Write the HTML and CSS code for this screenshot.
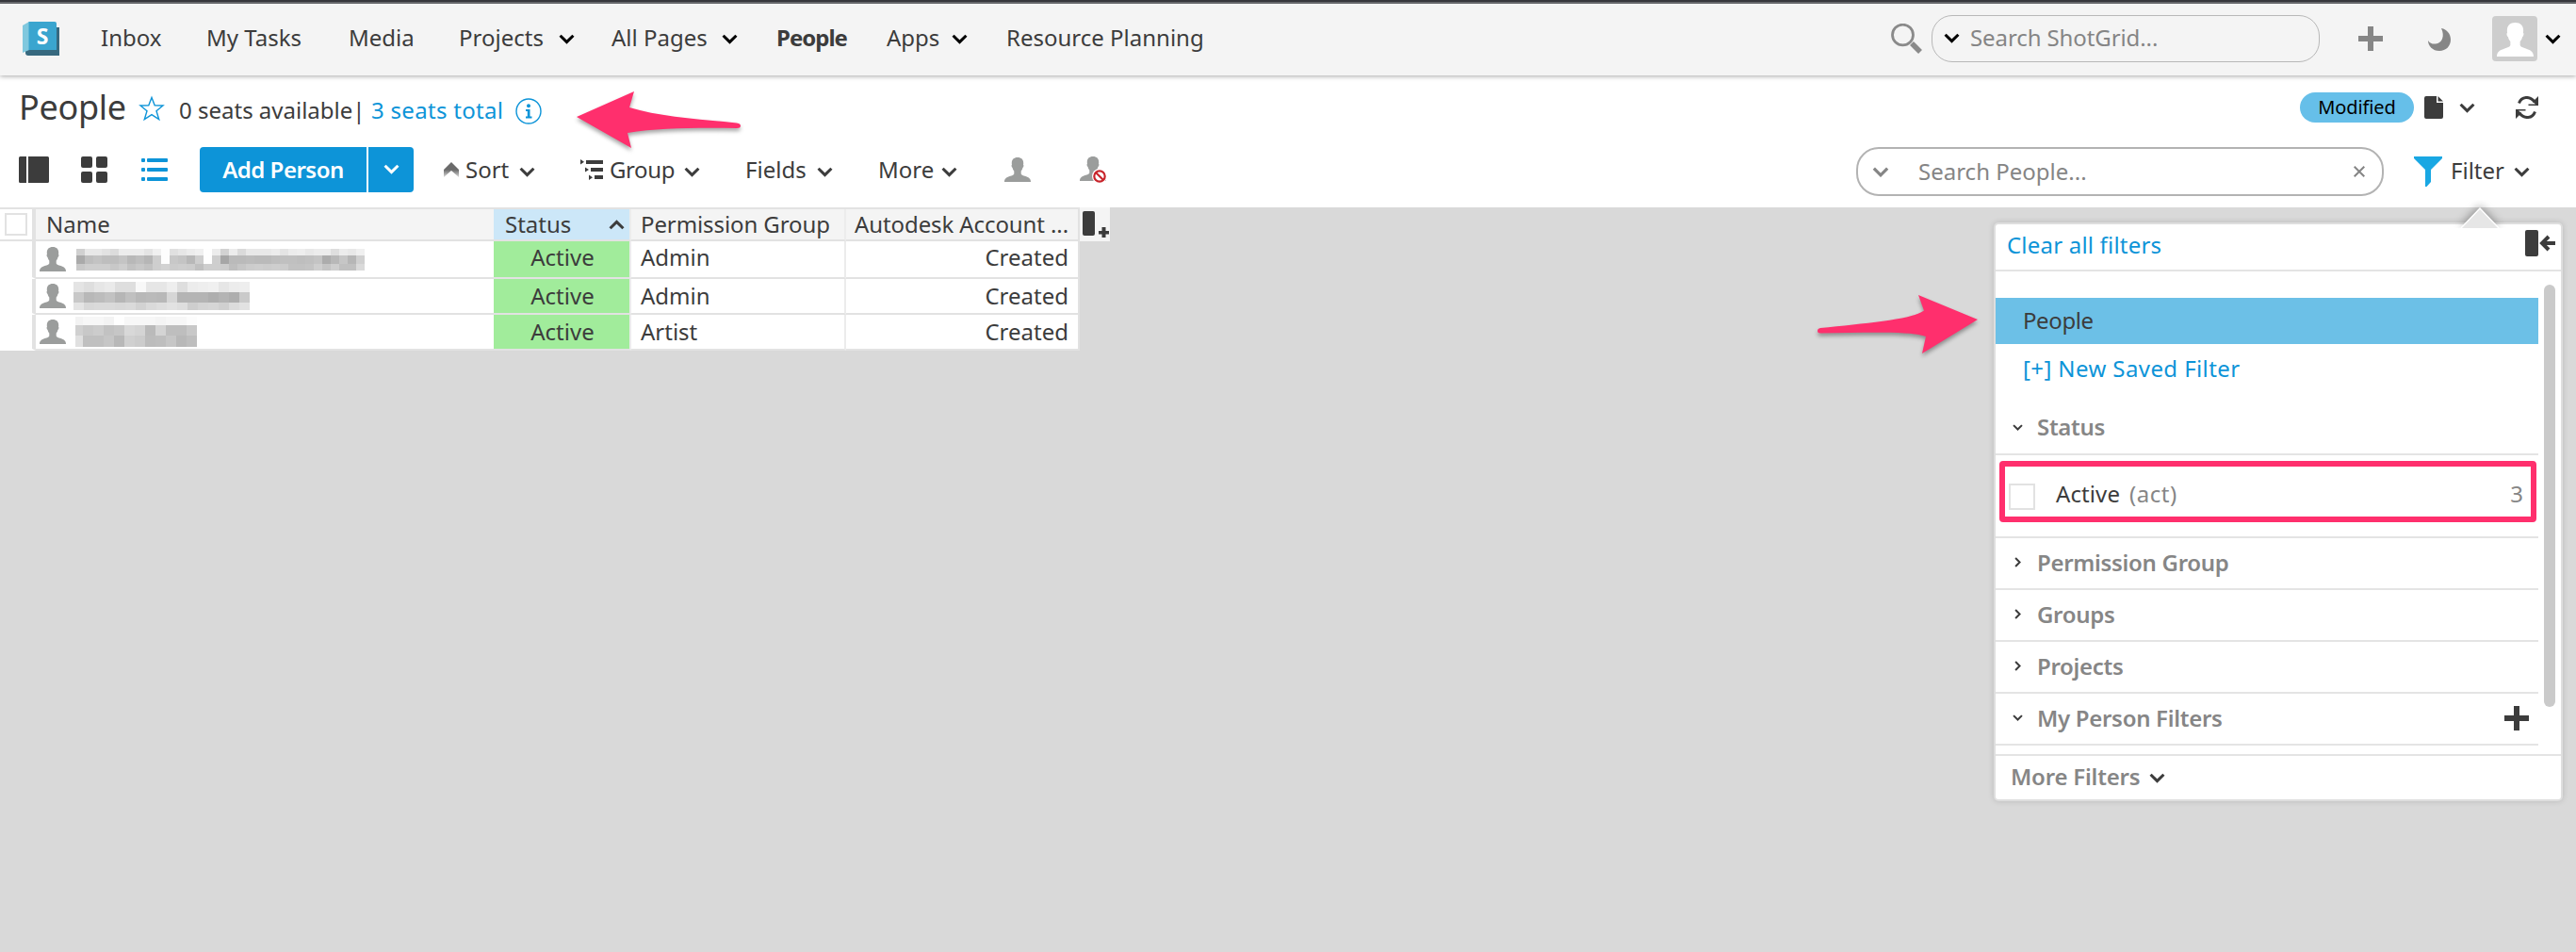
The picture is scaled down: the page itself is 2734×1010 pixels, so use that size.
FILE: index.html
```html
<!DOCTYPE html>
<html lang="en">
<head>
    <meta charset="UTF-8">
    <meta name="viewport" content="width=device-width, initial-scale=1.0">
    <title>People</title>
    <link rel="stylesheet" href="styles.css">
</head>
<body>
    <!-- shared icons -->
    <svg class="sprite" width="0" height="0">
        <symbol id="chevron" viewBox="0 0 16 10"><path d="M1.5 1.5 L8 8 L14.5 1.5" fill="none" stroke="currentColor" stroke-width="2.9"/></symbol>
        <symbol id="person" viewBox="0 0 28 26"><path d="M14 0c-4 0-6.200 2.300-6.200 6 0 .8 0 1.200.2 1.800-.8.200-.5 2.700.6 3.200.3 1.600.9 2.600 1.700 3.400v3c-.5 1.300-2 1.800-4.800 2.600C2 21.200 0 22.500 0 26h28c0-3.500-2-4.800-5.500-6-2.800-.8-4.300-1.300-4.800-2.600v-3c.8-.8 1.400-1.800 1.700-3.400 1.100-.5 1.400-3 .6-3.200.2-.6.2-1 .2-1.800C20.200 2.300 18 0 14 0z" fill="currentColor"/></symbol>
        <symbol id="plus" viewBox="0 0 26 26"><path d="M10 0h6v10h10v6H16v10h-6V16H0v-6h10z" fill="currentColor"/></symbol>
    </svg>

    <header class="topbar">
        <div class="logo">
            <svg width="39" height="36" viewBox="0 0 39 36">
                <path d="M3 30 H32 V6 H39 V36 H6 Q3 36 3 33 Z" fill="#37697f"/>
                <path d="M0 4 L7 0 V30 L0 33 Z" fill="#80c8de"/>
                <path d="M6.500 0 H34 Q36 0 36 2 V30 H6.500 Z" fill="#3aa5cf"/>
            </svg>
            <span class="logo-letter">S</span>
        </div>
        <nav class="nav">
            <a>Inbox</a>
            <a>My Tasks</a>
            <a>Media</a>
            <a class="drop projects">Projects <svg class="chev"><use href="#chevron"/></svg></a>
            <a class="drop pages">All Pages <svg class="chev"><use href="#chevron"/></svg></a>
            <a class="current">People</a>
            <a class="drop apps">Apps <svg class="chev"><use href="#chevron"/></svg></a>
            <a>Resource Planning</a>
        </nav>
        <div class="topbar-right">
            <svg class="magnifier" width="33" height="32" viewBox="0 0 33 32"><ellipse cx="12.500" cy="12" rx="11" ry="10.800" fill="none" stroke="#8a8a8a" stroke-width="2.800"/><path d="M22 21 L31 30" stroke="#8a8a8a" stroke-width="5.500"/></svg>
            <div class="search-global"><svg class="chev"><use href="#chevron"/></svg><span>Search ShotGrid...</span></div>
            <svg class="add" width="26" height="26"><use href="#plus"/></svg>
            <svg class="moon" width="24" height="24" viewBox="0 0 24 24"><path d="M14 0 C20 1 24 6 24 12 C24 19 19 24 12 24 C5 24 0 19 0 13 C2 16 5 17 8 16.500 C15 16 18 8 14 0 Z" fill="#868686"/></svg>
            <div class="avatar"><svg width="39" height="36" viewBox="0 0 28 26" preserveAspectRatio="none"><use href="#person"/></svg></div>
            <svg class="chev"><use href="#chevron"/></svg>
        </div>
    </header>

    <section class="page-head">
        <div class="title-row">
            <h1>People</h1>
            <svg class="star" width="28" height="28" viewBox="0 0 28 28"><path d="M14 2.500 L17.200 10.700 L26 11 L19 16.700 L21.700 25.600 L14 20.600 L6.300 25.600 L9 16.700 L2 11 L10.800 10.700 Z" fill="none" stroke="#0d94d8" stroke-width="1.400"/></svg>
            <span class="seats">0 seats available|</span>
            <a class="seats-total">3 seats total</a>
            <svg class="info" width="28" height="28" viewBox="0 0 28 28"><circle cx="14" cy="14" r="13" fill="none" stroke="#0d94d8" stroke-width="1.400"/><circle cx="14" cy="8.200" r="2" fill="#0d94d8"/><path d="M11 12h4.500v7.500H17.500v2h-6.500v-2h1.800V14H11z" fill="#0d94d8"/></svg>
            <div class="title-right">
                <span class="pill">Modified</span>
                <svg class="doc" width="20" height="24" viewBox="0 0 20 24"><path d="M2 0h11v7h7v15q0 2-2 2H2q-2 0-2-2V2q0-2 2-2z M14.500 0 L20 5.600 h-5.500z" fill="#3c3c3c"/></svg>
                <svg class="chev"><use href="#chevron"/></svg>
                <svg class="refresh" width="24" height="24" viewBox="0 0 24 24"><path d="M3.500 7.500 C6 0 15 -.5 20 6 M20.500 16.500 C18 24 9 24.500 4 18" fill="none" stroke="#3c3c3c" stroke-width="3"/><path d="M24 0v10H13.500V8.500H21L18 6zM0 24V14h10.500v1.500H3L6 18z" fill="#3c3c3c"/></svg>
            </div>
        </div>

        <div class="toolbar">
            <svg width="32" height="28" viewBox="0 0 32 28"><path d="M1.500 0H8v28H1.500Q0 28 0 26.500V1.500Q0 0 1.500 0zM10 0h20.500Q32 0 32 1.500v25q0 1.500-1.500 1.500H10z" fill="#3c3c3c"/></svg>
            <svg width="28" height="28" viewBox="0 0 28 28" fill="#3c3c3c"><rect width="12" height="12" rx="2"/><rect x="16" width="12" height="12" rx="2"/><rect y="16" width="12" height="12" rx="2"/><rect x="16" y="16" width="12" height="12" rx="2"/></svg>
            <svg width="28" height="24" viewBox="0 0 28 24" fill="#0d94d8"><rect width="4" height="4" rx="1"/><rect x="6" width="22" height="4" rx="1"/><rect y="10" width="4" height="4" rx="1"/><rect x="6" y="10" width="22" height="4" rx="1"/><rect y="20" width="4" height="4" rx="1"/><rect x="6" y="20" width="22" height="4" rx="1"/></svg>
            <div class="add-person"><button class="main">Add Person</button><button class="more"><svg class="chev"><use href="#chevron"/></svg></button></div>
            <a class="tool sort">
                <svg width="16" height="16" viewBox="0 0 16 16"><defs><linearGradient id="fade" x2="0" y2="1"><stop offset=".5" stop-color="#6a6a6a"/><stop offset="1" stop-color="#6a6a6a" stop-opacity=".25"/></linearGradient></defs><path d="M8 0 L16 8 V16 L8 9 L0 16 V8 Z" fill="url(#fade)"/></svg>
                <span>Sort</span><svg class="chev"><use href="#chevron"/></svg>
            </a>
            <a class="tool group">
                <svg width="24" height="22" viewBox="0 0 24 22" fill="#3c3c3c"><path d="M0 0l4 2.800L0 5.500zM6 1h18v4H6zM5 8.500l4 2.500-4 2.500zM11 9h13v4H11zM9 16.500l4 2.700L9 22zM15 17h9v4h-9z"/></svg>
                <span>Group</span><svg class="chev"><use href="#chevron"/></svg>
            </a>
            <a class="tool fields"><span>Fields</span><svg class="chev"><use href="#chevron"/></svg></a>
            <a class="tool more-menu"><span>More</span><svg class="chev"><use href="#chevron"/></svg></a>
            <svg class="grey" width="28" height="26"><use href="#person"/></svg>
            <svg class="grey" width="29" height="28" viewBox="0 0 29 28"><use href="#person" width="28" height="26"/><circle cx="21" cy="21" r="8" fill="#fff"/><circle cx="21" cy="21" r="5.700" fill="none" stroke="#c8242b" stroke-width="2.200"/><path d="M17 17l8 8" stroke="#c8242b" stroke-width="2.200"/></svg>
            <div class="toolbar-right">
                <div class="search-people"><svg class="chev"><use href="#chevron"/></svg><span>Search People...</span><svg class="clear" width="12" height="12" viewBox="0 0 12 12"><path d="M.7.7l10.600 10.600M11.300.7L.7 11.300" stroke="#858585" stroke-width="2"/></svg></div>
                <svg class="funnel" width="30" height="32" viewBox="0 0 30 32"><path d="M0 0h30v2L18 14v13l-4.500 5H12V14L0 2z" fill="#19a7e3"/></svg>
                <a class="tool filter"><span>Filter</span><svg class="chev"><use href="#chevron"/></svg></a>
            </div>
        </div>
    </section>

    <main class="content">
        <div class="table">
            <div class="row head">
                <div class="check"><span class="box"></span></div>
                <div class="name">Name</div>
                <div class="status">Status <svg class="chev up"><use href="#chevron"/></svg></div>
                <div class="perm">Permission Group</div>
                <div class="account">Autodesk Account ...</div>
            </div>
            <div class="row first">
                <div class="check"></div>
                <div class="name"><svg class="grey" width="28" height="26"><use href="#person"/></svg><div class="masked masked-1"></div></div>
                <div class="status">Active</div><div class="perm">Admin</div><div class="account">Created</div>
            </div>
            <div class="row">
                <div class="check"></div>
                <div class="name"><svg class="grey" width="28" height="26"><use href="#person"/></svg><div class="masked masked-2"></div></div>
                <div class="status">Active</div><div class="perm">Admin</div><div class="account">Created</div>
            </div>
            <div class="row">
                <div class="check"></div>
                <div class="name"><svg class="grey" width="28" height="26"><use href="#person"/></svg><div class="masked masked-3"></div></div>
                <div class="status">Active</div><div class="perm">Artist</div><div class="account">Created</div>
            </div>
        </div>
        <div class="add-column"><svg width="29" height="29" viewBox="0 0 29 29" fill="#3c3c3c"><rect width="13" height="26" rx="2"/><path d="M20.500 17h4v4H28v3.500h-3.500V28h-4v-3.500H17V21h3.500z"/></svg></div>
    </main>

    <aside class="panel">
        <svg class="pointer" width="60" height="34" viewBox="0 0 60 34"><path d="M10 30 L30 9 L50 30 Z" fill="#e6e6e6"/><path d="M10 30 L30 9 L50 30" fill="none" stroke="#fff" stroke-width="1.500"/></svg>
        <div class="panel-head">
            <a>Clear all filters</a>
            <svg width="32" height="28" viewBox="0 0 32 28"><rect width="14" height="28" rx="2" fill="#3c3c3c"/><path d="M25 7l-7 7 7 7M18 14h14" fill="none" stroke="#3c3c3c" stroke-width="4"/></svg>
        </div>
        <div class="panel-body">
            <div class="filters">
                <div class="saved">People</div>
                <div class="new-filter">[+] New Saved Filter</div>
                <div class="section status-section"><svg class="tiny"><use href="#chevron"/></svg>Status</div>
                <div class="option"><span class="box"></span><span class="label">Active</span><span class="code">(act)</span><span class="count">3</span></div>
                <div class="section"><svg class="tiny side"><use href="#chevron"/></svg>Permission Group</div>
                <div class="section"><svg class="tiny side"><use href="#chevron"/></svg>Groups</div>
                <div class="section"><svg class="tiny side"><use href="#chevron"/></svg>Projects</div>
                <div class="section"><svg class="tiny"><use href="#chevron"/></svg>My Person Filters<svg class="add" width="26" height="26"><use href="#plus"/></svg></div>
            </div>
            <div class="scrollbar"></div>
        </div>
        <div class="panel-foot">More Filters <svg class="chev"><use href="#chevron"/></svg></div>
    </aside>

    <!-- callouts -->
    <svg class="callout callout-seats" width="190" height="76" viewBox="0 0 190 76"><path d="M2 34 L63 7 L58 24 C90 34 130 36 172 40.500 Q176 41 176 43.500 Q176 46 172 46 C130 45.500 90 45.500 56 51 L60 67 Z" fill="#ff2f6d"/></svg>
    <svg class="callout callout-filter" width="190" height="80" viewBox="0 0 190 80"><path d="M170 34 L107 8 L113 24.500 C100 34 50 38 3 43 Q0 43.500 0 46 Q0 48.500 3 48.500 C50 48 100 46 115 52 L111 70 Z" fill="#ff2f6d"/></svg>
    <script>
        // grey levels of the masked names, one array per line of blocks
        const masks = {
            'masked-1': [
                [208,232,232,226,220,236,236,236,228,240,253,224,230,236,240,254,236,210,236,218,232,232,232,236,228,236,238,232,236,236,222,236,232,240],
                [170,190,195,190,190,196,184,190,182,206,253,200,196,184,206,254,206,166,186,186,188,186,186,190,192,192,190,192,196,172,184,198,182,208],
                [200,206,206,206,200,206,194,200,194,206,210,204,206,204,192,206,206,204,190,198,204,206,204,206,204,194,194,196,206,196,206,192,192,218]
            ],
            'masked-2': [
                [228,222,230,234,222,222,248,230,230,238,222,236,238,240,230,236,238],
                [200,184,188,194,182,192,184,186,184,214,180,180,180,174,180,174,202],
                [228,216,218,218,216,218,210,218,222,226,222,206,212,214,208,220,226]
            ],
            'masked-3': [
                [243,247,247,243,254,247,247,247,244,247,247,252],
                [208,200,204,194,198,216,212,186,212,190,190,200],
                [224,192,192,198,184,208,204,188,190,198,184,190]
            ]
        };

        for (const name in masks) {
            const el = document.querySelector('.' + name);
            masks[name].flat().forEach(level => {
                const block = document.createElement('i');
                block.style.background = `rgb(${level}, ${level}, ${level})`;
                el.appendChild(block);
            });
        }
    </script>
</body>
</html>
```
FILE: styles.css
```css
* {
    box-sizing: border-box;
}

body {
    margin: 0;
    height: 1010px;
    display: flex;
    flex-direction: column;
    position: relative;
    overflow: hidden;
    background-color: #d9d9d9;
    color: #3c3c3c;
    font-family: "Noto Sans", sans-serif;
    font-size: 24px;
    line-height: 32px;
    white-space: nowrap;
}

svg {
    display: block;
    flex: none;
}

.sprite {
    position: absolute;
}

.chev {
    width: 17px;
    height: 11px;
}

.grey {
    color: #9b9d9c;
}

.box {
    display: block;
    width: 24px;
    height: 24px;
    border: 2px solid #e2e2e2;
    background-color: #fff;
}

/* top bar */
.topbar {
    height: 80px;
    flex: none;
    display: flex;
    align-items: center;
    padding: 0 16px 0 24px;
    border-top: 2px solid #36373c;
    background-color: #f4f4f4;
    background-image: linear-gradient(#66676b 2px, transparent 2px);
    box-shadow: 0 1px 5px rgba(0, 0, 0, 0.35);
    position: relative;
    z-index: 1;
}

.logo {
    position: relative;
}

.logo-letter {
    position: absolute;
    left: 6px;
    top: -1px;
    width: 30px;
    text-align: center;
    font-weight: 700;
    font-size: 23px;
    color: #fff;
}

.nav {
    display: grid;
    grid-template-columns: 112px 151px 117px 162px 175px 117px 127px auto;
    margin-left: 44px;
    padding-bottom: 3px;
}

.nav .chev,
.topbar-right .chev {
    color: #000;
}

.drop {
    display: flex;
    align-items: center;
    justify-content: space-between;
}

.drop .chev {
    margin-top: 4px;
}

.projects {
    width: 123px;
}

.pages {
    width: 134px;
}

.apps {
    width: 86px;
}

.current {
    font-weight: 700;
    letter-spacing: -1px;
}

.topbar-right {
    display: flex;
    align-items: center;
    margin-left: auto;
}

.search-global {
    display: flex;
    align-items: center;
    width: 412px;
    height: 50px;
    margin-left: 10px;
    padding: 0 0 2px 12px;
    border: 1.5px solid #b8b8b8;
    border-radius: 22px;
    color: #858585;
}

.search-global span {
    margin-left: 11px;
    letter-spacing: -0.1px;
}

.topbar .add {
    margin-left: 41px;
    color: #868686;
}

.moon {
    margin: 2px 0 0 48px;
}

.avatar {
    display: flex;
    justify-content: center;
    align-items: flex-end;
    width: 48px;
    height: 48px;
    margin: 0 8px 0 44px;
    padding-bottom: 5px;
    border-radius: 4px;
    background-color: #cdcdcd;
    color: #fff;
}

/* page header */
.page-head {
    height: 140px;
    flex: none;
    background-color: #fff;
}

.title-row {
    display: flex;
    align-items: center;
    height: 70px;
    padding: 0 40px 0 20px;
}

h1 {
    width: 127px;
    margin: 0;
    padding-bottom: 3px;
    font-size: 36px;
    font-weight: 400;
    letter-spacing: -0.3px;
}

.star {
    margin-right: 15px;
}

.seats {
    width: 204px;
    padding-top: 3px;
}

.seats-total {
    width: 153px;
    padding-top: 3px;
    color: #0d94d8;
    letter-spacing: 0.3px;
}

.info {
    margin-top: 6px;
}

.title-right {
    display: flex;
    align-items: center;
    margin-left: auto;
    padding-bottom: 2px;
}

.pill {
    width: 121px;
    height: 32px;
    margin-right: 11px;
    border-radius: 16px;
    background-color: #66bfe9;
    color: #000;
    font-size: 20px;
    line-height: 31px;
    text-align: center;
    letter-spacing: -0.1px;
}

.doc {
    margin-right: 17px;
}

.refresh {
    margin-left: 43px;
}

.toolbar {
    display: grid;
    grid-template-columns: 66px 64px 62px 259px 145px 175px 141px 134px 80px auto 1fr;
    align-items: center;
    height: 60px;
    padding: 0 49px 0 20px;
}

.add-person {
    display: flex;
    gap: 2px;
    height: 48px;
}

.add-person button {
    padding: 0 0 2px;
    border: 0;
    background-color: #0d94d8;
    color: #fff;
    font: 600 24px "Noto Sans", sans-serif;
    letter-spacing: -0.5px;
}

.add-person .main {
    width: 177px;
    border-radius: 4px 0 0 4px;
}

.add-person .more {
    display: flex;
    justify-content: center;
    align-items: center;
    width: 48px;
    border-radius: 0 4px 4px 0;
}

.tool {
    display: flex;
    align-items: center;
}

.tool .chev {
    margin: 4px 0 0 auto;
}

.sort {
    width: 97px;
}

.sort span {
    margin-left: 7px;
}

.group {
    width: 127px;
}

.group span {
    margin-left: 7px;
    letter-spacing: -0.4px;
}

.fields {
    width: 93px;
}

.more-menu {
    width: 84px;
}

.toolbar-right {
    display: flex;
    align-items: center;
    justify-content: flex-end;
    padding-top: 4px;
}

.search-people {
    display: flex;
    align-items: center;
    width: 560px;
    height: 52px;
    padding: 0 18px 0 15px;
    border: 2px solid #b3b3b3;
    border-radius: 24px;
    color: #858585;
}

.search-people .chev {
    width: 18px;
    height: 11px;
}

.search-people span {
    margin-left: 31px;
    letter-spacing: 0;
}

.clear {
    margin-left: auto;
}

.funnel {
    margin: 0 9px 0 32px;
}

.filter {
    width: 84px;
    padding-bottom: 3px;
}

/* people table */
.content {
    display: flex;
    align-items: flex-start;
}

.table {
    border-top: 2px solid #e2e2e2;
    background-color: #fff;
}

.row {
    display: grid;
    grid-template-columns: 38px 486px 146px 228px 248px;
    height: 38px;
}

.row > div {
    display: flex;
    align-items: center;
    border-bottom: 2px solid #e2e2e2;
}

.row .check {
    border-right: 4px solid #e2e2e2;
    border-bottom-color: #fff;
}

.row .status {
    justify-content: center;
    padding-left: 2px;
    border-right: 2px solid #ececec;
    background-color: #a1ec9b;
}

.row .perm {
    padding-left: 10px;
    border-right: 2px solid #ececec;
}

.row .account {
    justify-content: flex-end;
    padding-right: 10px;
    border-right: 2px solid #e2e2e2;
}

.row.first {
    height: 40px;
}

.row.first .status,
.row.first .perm,
.row.first .account {
    padding-bottom: 4px;
}

.row .name {
    padding-left: 4px;
}

.head {
    height: 34px;
}

.row.head > div {
    background-color: #f4f4f4;
}

.row.head .check {
    padding-left: 5px;
    border-bottom-color: #e2e2e2;
    background-color: #fff;
}

.row.head .name {
    padding-left: 11px;
}

.row.head .status {
    justify-content: space-between;
    padding: 0 5px 0 12px;
    background-color: #cce7f8;
}

.row.head .perm {
    letter-spacing: -0.1px;
}

.row.head .account {
    letter-spacing: -0.1px;
}

.up {
    transform: rotate(180deg);
}

.masked {
    display: grid;
    margin-left: 11px;
}

.masked-1 {
    grid-template: 7px 9px 7px / repeat(34, 9px);
}

.masked-2 {
    grid-template: 11px 11px 8px / repeat(17, 11px);
    margin-left: 8px;
}

.masked-3 {
    grid-template: 9px 11px 12px / 8px repeat(11, 11px);
    margin-left: 10px;
}

.add-column {
    width: 32px;
    height: 36px;
    padding: 4px 0 0 3px;
    background-color: #f4f4f4;
}

/* filter menu */
.panel {
    position: absolute;
    left: 2116px;
    top: 236px;
    width: 604px;
    height: 614px;
    display: flex;
    flex-direction: column;
    border: 2px solid #dedede;
    border-radius: 5px;
    background-color: #fff;
    box-shadow: 0 0 6px rgba(0, 0, 0, 0.15);
    z-index: 2;
}

.pointer {
    position: absolute;
    left: 484px;
    top: -26px;
    filter: drop-shadow(0 -2px 5px rgba(0, 0, 0, 0.35));
    clip-path: inset(0 0 4px 0);
}

.panel-head {
    display: flex;
    justify-content: space-between;
    align-items: flex-start;
    height: 50px;
    padding: 6px 6px 0 12px;
    border-bottom: 2px solid #e4e4e4;
    color: #0d94d8;
    letter-spacing: 0.2px;
}

.panel-body {
    display: flex;
    height: 512px;
    overflow: hidden;
}

.filters {
    width: 576px;
    padding-top: 28px;
}

.saved {
    height: 49px;
    padding-left: 29px;
    background-color: #6cc0e7;
    line-height: 47px;
    letter-spacing: -0.4px;
}

.new-filter {
    height: 62px;
    padding-left: 29px;
    color: #0d94d8;
    line-height: 52px;
    letter-spacing: 0.4px;
}

.section {
    display: flex;
    align-items: center;
    height: 55px;
    padding: 0 10px 2px 18px;
    border-bottom: 2px solid #e4e4e4;
    color: #868686;
    font-weight: 600;
    letter-spacing: -0.3px;
}

.status-section {
    height: 56px;
}

.tiny {
    width: 11px;
    height: 7px;
    margin-right: 15px;
    color: #3c3c3c;
}

.side {
    transform: rotate(-90deg);
}

.section .add {
    margin-left: auto;
    color: #3c3c3c;
}

.option {
    display: flex;
    align-items: center;
    height: 65px;
    margin: 6px 2px 15px 4px;
    padding: 5px 8px 0 4px;
    border: 6px solid #ff2f6d;
    border-radius: 4px;
}

.option .box {
    width: 28px;
    height: 28px;
    margin-top: 5px;
}

.option .label {
    margin-left: 22px;
    letter-spacing: 0.1px;
}

.option .code {
    margin-left: 10px;
    color: #868686;
    letter-spacing: 0.5px;
}

.option .count {
    margin-left: auto;
    color: #868686;
}

.option + .section {
    height: 57px;
    border-top: 2px solid #e4e4e4;
}

.scrollbar {
    width: 12px;
    height: 448px;
    margin: 14px 0 0 6px;
    border-radius: 6px;
    background-color: #cacaca;
}

.panel-foot {
    display: flex;
    align-items: center;
    height: 48px;
    padding: 0 0 2px 16px;
    border-top: 2px solid #e4e4e4;
    color: #868686;
    font-weight: 600;
    letter-spacing: -0.2px;
}

.panel-foot .chev {
    margin: 3px 0 0 10px;
    color: #3c3c3c;
}

/* callout arrows lie over the page */
.callout {
    position: absolute;
    filter: drop-shadow(0 3px 2px rgba(0, 0, 0, 0.35));
    z-index: 3;
}

.callout-seats {
    left: 610px;
    top: 90px;
}

.callout-filter {
    left: 1929px;
    top: 305px;
}
```
